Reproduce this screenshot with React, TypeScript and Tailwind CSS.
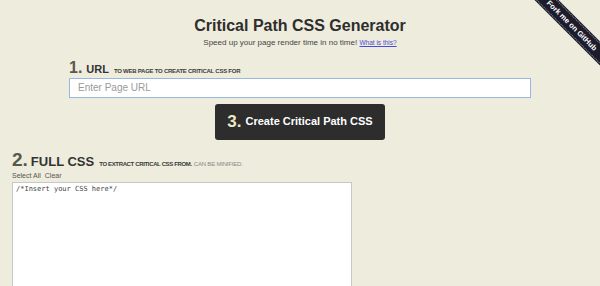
import { useState } from 'react'

export default function App() {
  const [url, setUrl] = useState('')
  const [css, setCss] = useState('/*Insert your CSS here*/')

  return (
    <div className="relative h-[286px] w-[600px] overflow-hidden bg-[#eeecdc] font-['Liberation_Sans',Arial,sans-serif] text-[#333]">
      {/* Fork ribbon */}
      <div className="absolute right-0 top-0 h-[80px] w-[80px] overflow-hidden">
        <div className="absolute left-[-8px] top-[17px] flex h-[17px] w-[120px] rotate-45 items-center bg-[#1c1c2c] py-[1px]">
          <div className="flex h-full w-full items-center justify-center border-y border-dotted border-white/50">
            <span className="text-[7.5px] font-bold leading-none text-white">Fork me on GitHub</span>
          </div>
        </div>
      </div>

      {/* Header */}
      <div className="flex flex-col items-center pt-[16px]">
        <h1 className="text-[16px] font-bold leading-[20px] text-[#2e2e2e]">Critical Path CSS Generator</h1>
        <p className="mt-[2px] text-[8px] leading-[10px] text-[#444]">
          Speed up your page render time in no time!{' '}
          <a href="#" className="text-[6.5px] text-[#4b4bd8] underline">
            What is this?
          </a>
        </p>
      </div>

      {/* Step 1 */}
      <div className="mx-auto mt-[11px] w-[462px]">
        <div className="flex items-baseline">
          <span className="text-[16px] font-bold leading-[18px] text-[#58584c]">1.</span>
          <span className="ml-[4px] text-[11px] font-bold text-[#333]">URL</span>
          <span className="ml-[5px] text-[6px] font-bold tracking-[-0.25px] text-[#3a3a3a]">TO WEB PAGE TO CREATE CRITICAL CSS FOR</span>
        </div>
        <input
          value={url}
          onChange={(e) => setUrl(e.target.value)}
          placeholder="Enter Page URL"
          className="mt-[0px] block h-[20px] w-full border border-[#9bb6e2] bg-white px-[8px] text-[10px] text-[#333] outline-none placeholder:text-[#9a9a9a]"
        />
        <div className="mt-[6px] flex justify-center">
          <button className="flex h-[36px] w-[170px] items-center justify-center gap-[4px] rounded-[3px] bg-[#2d2d2d]">
            <span className="text-[17px] font-bold text-[#ece8c6]">3.</span>
            <span className="text-[11px] font-bold text-white">Create Critical Path CSS</span>
          </button>
        </div>
      </div>

      {/* Step 2 */}
      <div className="ml-[12px] mt-[10px]">
        <div className="flex items-baseline">
          <span className="text-[19px] font-bold leading-[20px] text-[#58584c]">2.</span>
          <span className="ml-[3px] text-[13px] font-bold text-[#333]">FULL CSS</span>
          <span className="ml-[5px] text-[6px] font-bold tracking-[-0.35px] text-[#3a3a3a]">TO EXTRACT CRITICAL CSS FROM.</span>
          <span className="ml-[2px] text-[6px] tracking-[-0.2px] text-[#888]">CAN BE MINIFIED.</span>
        </div>
        <div className="flex gap-[4px] text-[7px] leading-[10px] text-[#555]">
          <span>Select All</span>
          <span>Clear</span>
        </div>
        <textarea
          value={css}
          onChange={(e) => setCss(e.target.value)}
          className="mt-[1px] block h-[120px] w-[340px] resize-none border border-[#c8c8c8] bg-white px-[3px] py-[2px] font-['DejaVu_Sans_Mono',monospace] text-[7px] leading-[9px] text-[#444] outline-none"
        />
      </div>
    </div>
  )
}
